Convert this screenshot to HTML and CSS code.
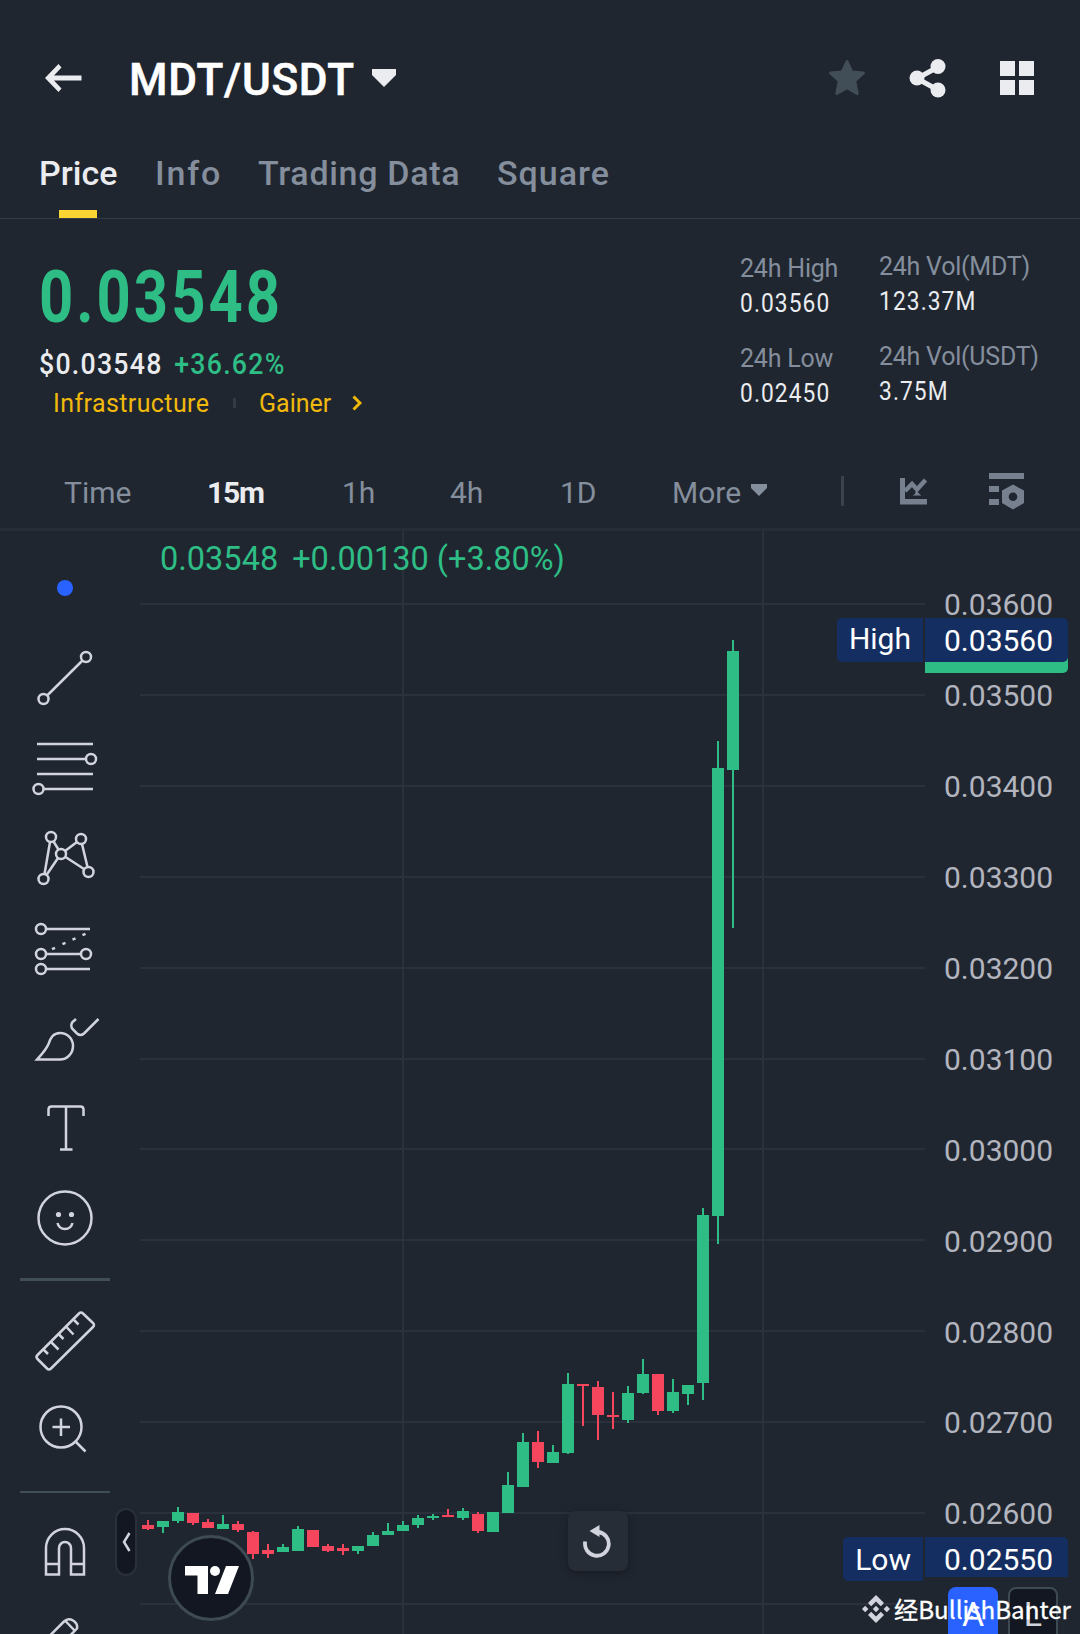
FILE: index.html
```html
<!DOCTYPE html>
<html lang="en">
  <head>
    <meta charset="UTF-8" />
    <meta name="viewport" content="width=device-width, initial-scale=1.0" />
    <title>MDT/USDT</title>
    <link rel="stylesheet" href="styles.css">
  </head>
  <body>
    <header class="header">
      <svg class="back" width="38" height="30" viewBox="0 0 38 30">
        <path d="M14.500 1L1 15l13.500 14 3-3.500L10 17.500h27.500v-5H10l7.500-8z" />
      </svg>
      <h1>MDT/USDT</h1>
      <svg class="caret" width="24" height="18" viewBox="0 0 24 18">
        <path d="M0 0h24v6L12 18 0 6z" />
      </svg>
      <div class="header-actions">
        <svg width="38" height="38" viewBox="0 0 38 38">
          <path class="star" d="M19 2.500l4.700 10.400 11.800 1.100-8.800 7.800 2.500 12.700-10.200-5.900-10.200 5.900 2.500-12.700-8.800-7.800 11.800-1.100z" />
        </svg>
        <svg width="38" height="40" viewBox="0 0 38 40">
          <path class="share-line" d="M29 9L8 20.500 29 32" />
          <circle cx="29" cy="8.500" r="7.500" />
          <circle cx="8" cy="20" r="7.500" />
          <circle cx="29" cy="32" r="7.500" />
        </svg>
        <svg width="34" height="34" viewBox="0 0 34 34">
          <path d="M0 0h15v15H0zM19 0h15v15H19zM0 19h15v15H0zM19 19h15v15H19z" />
        </svg>
      </div>
    </header>

    <nav class="tabs">
      <a class="tab tab-price active">Price</a>
      <a class="tab tab-info">Info</a>
      <a class="tab tab-data">Trading Data</a>
      <a class="tab tab-square">Square</a>
    </nav>

    <section class="summary">
      <div class="price-box">
        <div class="price">0.03548</div>
        <div class="sub-price"><span class="fiat">$0.03548</span><span class="change">+36.62%</span></div>
        <div class="tags">
          <span class="tag-infra">Infrastructure</span>
          <i class="tag-sep"></i>
          <span class="tag-gainer">Gainer</span>
          <svg width="10" height="16" viewBox="0 0 10 16"><path d="M1.500 1.500L8 8l-6.500 6.500" /></svg>
        </div>
      </div>
      <dl class="stats">
        <div><dt>24h High</dt><dd>0.03560</dd></div>
        <div><dt>24h Low</dt><dd>0.02450</dd></div>
      </dl>
      <dl class="stats stats-vol">
        <div><dt>24h Vol(MDT)</dt><dd>123.37M</dd></div>
        <div><dt>24h Vol(USDT)</dt><dd>3.75M</dd></div>
      </dl>
    </section>

    <div class="intervals">
      <span class="time">Time</span>
      <span class="m15 selected">15m</span>
      <span class="h1">1h</span>
      <span class="h4">4h</span>
      <span class="d1">1D</span>
      <span class="more">More
        <svg width="16" height="12" viewBox="0 0 16 12"><path d="M0 0h16v4l-8 8-8-8z" /></svg>
      </span>
      <i class="interval-sep"></i>
      <svg class="indicator-icon" width="28" height="28" viewBox="0 0 28 28">
        <path d="M0 1h5v21h22v5.500H0z" />
        <path class="stroke" d="M5 14l7-7 5 5.500 8.500-9.500" />
        <path d="M16 13l3.500 4 2 1.500h-9l2.500-1.500z" />
      </svg>
      <svg class="settings-icon" width="36" height="38" viewBox="0 0 36 38">
        <path d="M0 1h35v6H0zM0 14h10v6H0zM0 27h10v6H0z" />
        <path fill-rule="evenodd" d="M24 12.500l11 6v12.500l-11 6.500-11-6.500V18.500zM24 20.500a4.300 4.300 0 1 0 0 8.600 4.300 4.300 0 1 0 0-8.600z" />
      </svg>
    </div>

    <main class="chart">
      <aside class="toolbar">
        <div class="dot-cell"><i class="dot"></i></div>
        <svg class="tool" viewBox="0 0 130 90">
          <path d="M47.200 62.500L82.500 27.500" />
          <circle cx="86" cy="24" r="5" /><circle cx="43.500" cy="66" r="5" />
        </svg>
        <svg class="tool" viewBox="0 0 130 90">
          <path d="M37 21h56M37 36h49M37 51h56M44 66h49" />
          <circle cx="91" cy="36" r="5" /><circle cx="38.500" cy="66" r="5" />
        </svg>
        <svg class="tool" viewBox="0 0 130 90">
          <path d="M50 29l-5.500 32M53.500 28.500l5 8M58 45L46.500 62M65 38l12-9M82 31l5.500 23M65.500 44L84 56" />
          <circle cx="51" cy="24" r="5" /><circle cx="81" cy="26" r="5" />
          <circle cx="61" cy="41" r="5" /><circle cx="88.500" cy="59" r="5" />
          <circle cx="43.500" cy="66" r="5" />
        </svg>
        <svg class="tool" viewBox="0 0 130 90">
          <path d="M46 26h44M46 51h35M46 66h44" />
          <path d="M52 46.200l3-1.400M62.500 41.200l3-1.400M72.500 36.700l3-1.400M82.500 32.200l3-1.400" />
          <circle cx="41" cy="26" r="5" /><circle cx="41" cy="51" r="5" />
          <circle cx="86" cy="51" r="5" /><circle cx="41" cy="66" r="5" />
        </svg>
        <svg class="tool" viewBox="0 0 130 90">
          <path d="M37 66.500H60c7 0 13-6 13-13.500S67 40 60 40s-9.500 5-11.500 11C46 57 42 61 37 66.500z" />
          <path d="M76 26l-3.500 3q-2.500 3.500 0 7l4.500 4.500q3.500 3 7 0L98.500 26" />
        </svg>
        <svg class="tool" viewBox="0 0 130 90">
          <path d="M48.500 33v-6.500q0-3 3-3h29q3 0 3 3V33M66 24v42.500M60 66.500h12.500" />
        </svg>
        <svg class="tool" viewBox="0 0 130 90">
          <circle cx="65" cy="45" r="26.500" />
          <circle class="fill" cx="58.500" cy="41.500" r="2.600" /><circle class="fill" cx="71.500" cy="41.500" r="2.600" />
          <path d="M57.500 50c2 8 13 8 15 0" />
        </svg>
        <hr class="divider" />
        <svg class="tool" viewBox="0 0 130 90">
          <path d="M79 18.500q2-2 4 0L93 28q2 2 0 4L51 73.500q-2 2-4 0L37.500 64q-2-2 0-4z" />
          <path d="M43.500 54.500l4.500 4.500M51 47l7.500 7.500M59 39.500l4.500 4.500M66.500 32l7 7.500M74 25l4.500 4.500" />
        </svg>
        <svg class="tool" viewBox="0 0 130 90">
          <circle cx="61" cy="42" r="20.500" />
          <path d="M52.500 42H70M61 33.500V51M76 57l9.500 9.500" />
        </svg>
        <hr class="divider divider-thin" />
        <svg class="tool" viewBox="0 0 130 90">
          <path d="M46 68.500V42a19 19 0 0 1 38 0v26.500H71V42a6 6 0 0 0-12 0v26.500zM46 58h13M71 58h13" />
        </svg>
        <svg class="tool" viewBox="0 0 130 90">
          <path d="M44 45.500L64 25.500q4-4 9-1t4 8L56 54M65 24.500l10 10.500" />
        </svg>
      </aside>

      <div class="plot">
        <svg id="candles" width="785" height="1103" viewBox="140 531 785 1103"></svg>
        <div class="legend"><span>0.03548</span><span class="legend-change">+0.00130 (+3.80%)</span></div>
        <div class="tv-logo">
          <svg width="54" height="28" viewBox="0 0 54 28">
            <path d="M0 0h23v28H12.500V9.500H0zM41 0h13L43 28H30z" />
            <circle cx="30" cy="5" r="5" />
          </svg>
        </div>
        <div class="reset">
          <svg width="30" height="34" viewBox="0 0 30 34">
            <path class="arc" d="M3.200 17.500a11.900 11.900 0 1 0 13-9.500" />
            <path class="head" d="M7.500 7L17.500 1v12z" />
          </svg>
        </div>
      </div>

      <div class="axis" id="axis"></div>

      <div class="marker high"><span class="marker-name">High</span><span class="marker-value">0.03560</span></div>
      <div class="marker low"><span class="marker-name">Low</span><span class="marker-value">0.02550</span></div>

      <div class="collapse">
        <svg width="10" height="20" viewBox="0 0 10 20"><path d="M7.500 1L2 10l5.500 9" /></svg>
      </div>

      <div class="scale-buttons">
        <span class="scale-btn auto">A</span>
        <span class="scale-btn log">L</span>
      </div>

      <div class="watermark">
        <svg width="28" height="28" viewBox="0 0 28 28">
          <path d="M14 0l8 8-3.200 3.200L14 6.400l-4.800 4.800L6 8zM14 28l-8-8 3.200-3.200 4.800 4.800 4.800-4.800L22 20zM3.200 10.800L6.400 14l-3.200 3.200L0 14zM24.800 10.800L28 14l-3.200 3.200-3.200-3.200zM14 10.800l3.200 3.200-3.200 3.200-3.200-3.200z" />
        </svg>
        <span>经BullishBanter</span>
      </div>
    </main>

    <script>
      // direction, wick top, body top, body bottom, wick bottom
      const candles = [
        ["down", 1520, 1525, 1529, 1530],
        ["up", 1521, 1521, 1527, 1533],
        ["up", 1507, 1512, 1521, 1523],
        ["down", 1513, 1513, 1523, 1525],
        ["down", 1519, 1522, 1528, 1528],
        ["up", 1515, 1524, 1529, 1529],
        ["down", 1521, 1524, 1530, 1532],
        ["down", 1531, 1532, 1554, 1559],
        ["down", 1544, 1550, 1554, 1558],
        ["up", 1544, 1547, 1552, 1552],
        ["up", 1526, 1529, 1551, 1551],
        ["down", 1530, 1530, 1547, 1547],
        ["down", 1544, 1546, 1551, 1552],
        ["down", 1544, 1548, 1551, 1555],
        ["up", 1546, 1546, 1551, 1554],
        ["up", 1532, 1535, 1546, 1546],
        ["up", 1523, 1531, 1535, 1535],
        ["up", 1521, 1525, 1531, 1531],
        ["up", 1515, 1518, 1525, 1528],
        ["up", 1514, 1516, 1518, 1520],
        ["down", 1509, 1515, 1517, 1517],
        ["up", 1508, 1511, 1518, 1520],
        ["down", 1512, 1514, 1531, 1533],
        ["up", 1512, 1512, 1532, 1532],
        ["up", 1472, 1485, 1513, 1513],
        ["up", 1433, 1442, 1487, 1487],
        ["down", 1431, 1442, 1462, 1468],
        ["up", 1445, 1452, 1463, 1463],
        ["up", 1373, 1384, 1453, 1454],
        ["down", 1384, 1384, 1386, 1426],
        ["down", 1381, 1387, 1415, 1440],
        ["down", 1392, 1415, 1417, 1429],
        ["up", 1386, 1393, 1420, 1423],
        ["up", 1359, 1374, 1393, 1394],
        ["down", 1374, 1374, 1411, 1415],
        ["up", 1379, 1392, 1411, 1413],
        ["up", 1385, 1385, 1394, 1405],
        ["up", 1208, 1215, 1383, 1400],
        ["up", 741, 768, 1216, 1244],
        ["up", 640, 651, 770, 928],
      ];

      function rect(cls, x, y, width, height) {
        return `<rect class="${cls}" x="${x}" y="${y}" width="${width}" height="${height}" />`;
      }

      let shapes = "";
      let labels = "";
      for (let i = 0; i < 12; i++) {
        shapes += rect("grid", 140, Math.round(603 + i * 90.9), 785, 2);
        // the last line runs behind the scale buttons and has no label
        if (i < 11) {
          labels += `<span>${(0.036 - i * 0.001).toFixed(5)}</span>`;
        }
      }
      shapes += rect("grid", 402, 531, 2, 1103) + rect("grid", 762, 531, 2, 1103);

      candles.forEach(([dir, high, top, bottom, low], i) => {
        const x = 142 + i * 15;
        shapes += rect(dir, x + 5, high, 2, low - high);
        shapes += rect(dir, x, top, 12, bottom - top);
      });

      document.getElementById("candles").innerHTML = shapes;
      document.getElementById("axis").innerHTML = labels;
    </script>
  </body>
</html>
```
FILE: styles.css
```css
* {
  box-sizing: border-box;
}
body {
  margin: 0;
  height: 1634px;
  overflow: hidden;
  background-color: #202630;
  color: #eaecef;
  font-family: Roboto, "Noto Sans CJK SC", sans-serif;
}
svg {
  display: block;
  flex-shrink: 0;
}
span {
  white-space: nowrap;
}

/* Header */
.header {
  display: flex;
  align-items: center;
  height: 142px;
  padding: 14px 46px 0 44px;
  fill: #eaecef;
}
h1 {
  margin: 4px 0 0 47px;
  width: 243px;
  font-size: 44px;
  font-weight: 500;
  line-height: 52px;
  letter-spacing: 0.7px;
  color: #fff;
  -webkit-text-stroke: 0.6px #fff;
}
.header .caret {
  margin-top: -1px;
}
.header-actions {
  display: flex;
  align-items: center;
  margin-left: auto;
}
.header-actions svg:nth-child(2) {
  margin: 0 53px 0 43px;
}
.star {
  fill: #414d57;
  stroke: #414d57;
  stroke-width: 3;
  stroke-linejoin: round;
}
.share-line {
  fill: none;
  stroke: #eaecef;
  stroke-width: 5;
}

/* Tabs */
.tabs {
  display: flex;
  height: 77px;
  padding-left: 39px;
  border-bottom: 1px solid #333b45;
}
.tab {
  padding-top: 11px;
  font-size: 34px;
  font-weight: 500;
  line-height: 40px;
  color: #848e9c;
  white-space: nowrap;
}
.tab-price {
  width: 116px;
}
.tab-info {
  width: 103px;
  letter-spacing: 1.8px;
}
.tab-data {
  width: 239px;
  letter-spacing: 0.7px;
}
.tab-square {
  letter-spacing: 1px;
}
.tab.active {
  color: #eaecef;
}
.tab.active::after {
  content: "";
  display: block;
  width: 38px;
  height: 8px;
  margin: 17px 0 0 20px;
  background-color: #fcd535;
}

/* Price summary */
.summary {
  display: flex;
  height: 231px;
}
.price-box {
  width: 740px;
  padding: 35px 0 0 39px;
}
/* narrow, DIN-like figures */
.price,
.sub-price,
.stats dd {
  transform-origin: left;
}
.price {
  height: 86px;
  padding-top: 1px;
  font-size: 72px;
  font-weight: 700;
  line-height: 86px;
  letter-spacing: 3.6px;
  color: #2ebd85;
  transform: scaleX(0.83);
}
.sub-price {
  height: 46px;
  font-size: 30px;
  font-weight: 500;
  line-height: 47px;
  letter-spacing: 1.4px;
  transform: scaleX(0.89);
}
.fiat {
  display: inline-block;
  width: 152px;
}
.change {
  color: #2ebd85;
}
.tags {
  display: flex;
  align-items: center;
  height: 34px;
  padding-left: 14px;
  font-size: 25px;
  color: #f0b90b;
}
.tag-infra {
  width: 180px;
  letter-spacing: 0.4px;
}
.tag-sep {
  width: 3px;
  height: 10px;
  margin-right: 23px;
  background-color: #333b45;
}
.tag-gainer {
  width: 93px;
}
.tags path {
  fill: none;
  stroke: #f0b90b;
  stroke-width: 3;
}
.stats {
  width: 139px;
  margin: 0;
  padding-top: 32px;
  font-size: 25px;
}
.stats-vol {
  width: 190px;
  padding-top: 30px;
}
.stats div {
  height: 90px;
  white-space: nowrap;
}
.stats dt {
  line-height: 35px;
  color: #848e9c;
  letter-spacing: -0.2px;
}
.stats-vol dt {
  letter-spacing: -0.250px;
}
.stats dd {
  margin: 0;
  line-height: 35px;
  letter-spacing: 1.2px;
  transform: scaleX(0.91);
}

/* Interval bar */
.intervals {
  display: flex;
  align-items: center;
  height: 81px;
  padding: 6px 0 0 64px;
  border-bottom: 3px solid #262d36;
  font-size: 30px;
  color: #848e9c;
}
.selected {
  font-weight: 700;
  letter-spacing: -1.2px;
  color: #eaecef;
}
.time {
  width: 143px;
}
.m15 {
  width: 135px;
}
.h1 {
  width: 108px;
}
.h4 {
  width: 110px;
}
.d1 {
  width: 112px;
}
.more {
  display: flex;
  width: 169px;
}
.more svg {
  margin: 9px 0 0 10px;
  fill: #848e9c;
}
.interval-sep {
  width: 3px;
  height: 30px;
  margin-top: -2px;
  background-color: #3a424d;
}
.indicator-icon {
  margin: -2px 0 0 56px;
  fill: #76808f;
}
.indicator-icon .stroke {
  fill: none;
  stroke: #76808f;
  stroke-width: 4.500;
}
.settings-icon {
  margin: -2px 0 0 61px;
  fill: #76808f;
}

/* Chart */
.chart {
  position: relative;
  display: flex;
  height: 1103px;
  overflow: hidden;
}
.toolbar {
  width: 140px;
  flex-shrink: 0;
}
.dot-cell {
  height: 102px;
  padding: 49px 0 0 57px;
}
.dot {
  display: block;
  width: 16px;
  height: 16px;
  border-radius: 50%;
  background-color: #2962ff;
}
.tool {
  width: 130px;
  height: 90px;
  fill: none;
  stroke: #d1d4dc;
  stroke-width: 2.500;
}
.tool .fill {
  fill: #d1d4dc;
  stroke: none;
}
.divider {
  width: 90px;
  height: 3px;
  margin: 15px 0 14px 20px;
  border: 0;
  background-color: #414d57;
}
.divider-thin {
  height: 2px;
  margin-top: 16px;
  margin-bottom: 13px;
}
.plot {
  position: relative;
  width: 785px;
}
.grid {
  fill: #2b313c;
}
.up {
  fill: #2ebd85;
}
.down {
  fill: #f6465d;
}
.legend {
  position: absolute;
  top: 8px;
  left: 20px;
  font-size: 32.500px;
  line-height: 40px;
  color: #2ebd85;
}
.legend-change {
  margin-left: 14px;
}
.tv-logo {
  position: absolute;
  left: 28px;
  top: 1004px;
  width: 86px;
  height: 86px;
  padding: 28px 0 0 14px;
  border: 3px solid #3e4a53;
  border-radius: 50%;
  background-color: #131722;
  fill: #fff;
}
.reset {
  position: absolute;
  left: 428px;
  top: 980px;
  width: 60px;
  height: 60px;
  padding: 13px 0 0 14px;
  border-radius: 8px;
  background-color: #272d37;
  box-shadow: 0 2px 8px rgba(0, 0, 0, 0.35);
}
.reset .arc {
  fill: none;
  stroke: #d1d4dc;
  stroke-width: 3.800;
}
.reset .head {
  fill: #d1d4dc;
}
.axis {
  padding: 28px 0 0 19px;
  font-size: 30px;
  color: #b2b5be;
}
.axis span {
  display: block;
  height: 90.950px;
  line-height: 91px;
}
.marker {
  position: absolute;
  right: 12px;
  display: flex;
  gap: 2px;
  height: 44px;
  font-size: 30px;
  line-height: 46px;
  color: #fff;
}
.marker-name {
  padding: 0 12px;
  border-radius: 5px 0 0 5px;
  background-color: #152e62;
  line-height: 42px;
}
.marker-value {
  width: 143px;
  padding-left: 19px;
  border-radius: 0 5px 5px 0;
  background-color: #152e62;
}
.high {
  top: 87px;
}
.high .marker-value {
  box-shadow: 0 11px 0 #2ebd85;
}
.low {
  top: 1006px;
}
.low .marker-name {
  line-height: 45px;
}
.low .marker-value {
  height: 40px;
  border-bottom-right-radius: 0;
}
.collapse {
  position: absolute;
  left: 115px;
  top: 977px;
  width: 22px;
  height: 68px;
  padding: 22px 0 0 5px;
  border: 2px solid #2a303b;
  border-radius: 11px;
  background-color: #131722;
}
.collapse path {
  fill: none;
  stroke: #d1d4dc;
  stroke-width: 2.500;
}
.scale-buttons {
  position: absolute;
  left: 948px;
  top: 1056px;
  display: flex;
  gap: 10px;
}
.scale-btn {
  width: 50px;
  height: 60px;
  border-radius: 8px;
  font-size: 34px;
  line-height: 54px;
  text-align: center;
}
.auto {
  background-color: #2962ff;
  color: #fff;
}
.log {
  border: 2px solid #3e4a53;
  background-color: #131722;
  color: #d1d4dc;
  line-height: 50px;
}
.watermark {
  position: absolute;
  left: 862px;
  top: 1060px;
  display: flex;
  align-items: center;
  gap: 4px;
  font-family: "Noto Sans CJK SC", sans-serif;
  font-size: 24.200px;
  line-height: 36px;
  color: #fff;
  fill: #d1d4dc;
  -webkit-text-stroke: 0.3px #fff;
}
```
